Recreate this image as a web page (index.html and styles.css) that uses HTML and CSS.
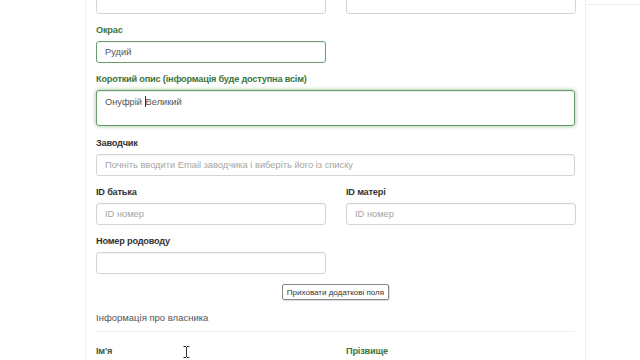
FILE: index.html
```html
<!DOCTYPE html>
<html lang="uk">

<head>
    <meta charset="UTF-8" />
    <meta name="viewport" content="width=device-width, initial-scale=1.0" />
    <title>Додати кота</title>
    <link rel="stylesheet" href="styles.css">
</head>

<body>
    <div class="topline"></div>
    <div class="panel">
        <form class="form">
            <!-- верхній ряд (мітки прокручені за край) -->
            <div class="row">
                <div class="group">
                    <input type="text" class="field">
                </div>
                <div class="group">
                    <input type="text" class="field">
                </div>
            </div>

            <div class="row">
                <div class="group success">
                    <label>Окрас</label>
                    <input type="text" class="field" value="Рудий">
                </div>
            </div>

            <div class="group success tall">
                <label>Короткий опис (інформація буде доступна всім)</label>
                <div class="field area focused">Онуфрій <span class="caret"></span>Великий</div>
            </div>

            <div class="group">
                <label>Заводчик</label>
                <input type="text" class="field" placeholder="Почніть вводити Email заводчика і виберіть його із списку">
            </div>

            <div class="row">
                <div class="group">
                    <label>ID батька</label>
                    <input type="text" class="field" placeholder="ID номер">
                </div>
                <div class="group">
                    <label>ID матері</label>
                    <input type="text" class="field" placeholder="ID номер">
                </div>
            </div>

            <div class="row">
                <div class="group">
                    <label>Номер родоводу</label>
                    <input type="text" class="field">
                </div>
            </div>

            <div class="actions">
                <button type="button" class="toggle-btn">Приховати додаткові поля</button>
            </div>

            <div class="legend">Інформація про власника</div>

            <div class="row">
                <div class="group success">
                    <label class="dim">Ім'я</label>
                </div>
                <div class="group success">
                    <label>Прізвище</label>
                </div>
            </div>
        </form>

        <svg class="ibeam" width="7" height="12" viewBox="0 0 7 12">
            <path d="M0.5 0.5h2.5M4 0.5h2.5M3.5 1v10M0.5 11.5h2.5M4 11.5h2.5" stroke="#333" stroke-width="1" fill="none" />
        </svg>
    </div>
</body>

</html>
```

FILE: styles.css
```css
body {
    margin: 0;
    background: #fff;
    font-family: 'Liberation Sans', Arial, sans-serif;
    font-size: 9.5px;
    color: #555;
    overflow: hidden;
}

.topline {
    position: absolute;
    top: 4px;
    left: 585px;
    right: 0;
    height: 1px;
    background: #f0f0f0;
}

.panel {
    position: relative;
    width: 479px;
    margin-left: 85px;
    margin-top: -8px;
    padding: 0 10px 40px;
    border-left: 1px solid #efefef;
    border-right: 1px solid #efefef;
}

.form {
    display: flex;
    flex-direction: column;
}

.row {
    display: grid;
    grid-template-columns: 230px 230px;
    column-gap: 20px;
}

.group {
    display: flex;
    flex-direction: column;
    margin-bottom: 9px;
}

.group.tall {
    margin-bottom: 10px;
}

.group label {
    font-size: 9.2px;
    font-weight: bold;
    letter-spacing: -0.2px;
    color: #333;
    line-height: 14px;
    margin-bottom: 4px;
}

.group.success label {
    color: #3c763d;
}

.group.success label.dim {
    color: #3f5a40;
}

.field {
    box-sizing: border-box;
    height: 22px;
    padding: 0 8px;
    border: 1px solid #d4d4d4;
    border-radius: 3px;
    font-family: inherit;
    font-size: 9.3px;
    color: #555;
    background: #fff;
    box-shadow: inset 0 1px 1px rgba(0, 0, 0, 0.04);
}

.field::placeholder {
    color: #a5a5a5;
}

.group.success .field {
    border-color: #6b9a6c;
}

.area {
    height: 36px;
    padding: 4px 8px;
    line-height: 14px;
}

.area.focused {
    border-color: #4f7f50;
    box-shadow: inset 0 1px 1px rgba(0, 0, 0, 0.07), 0 0 4px #8fbf90;
}

.caret {
    display: inline-block;
    width: 1px;
    height: 11px;
    background: #333;
    vertical-align: -2px;
}

.actions {
    display: flex;
    justify-content: center;
    margin: 1px 0 11px;
}

.toggle-btn {
    height: 16px;
    padding: 0 4px;
    font-family: inherit;
    font-size: 8px;
    color: #333;
    background: #fff;
    border: 1px solid #8a8a8a;
    border-radius: 2px;
    box-shadow: 1px 1px 1px rgba(0, 0, 0, 0.15);
}

.legend {
    color: #555;
    line-height: 14px;
    padding-bottom: 6px;
    border-bottom: 1px solid #eee;
    margin-bottom: 12px;
}

.ibeam {
    position: absolute;
    left: 97px;
    top: 354px;
}
```
